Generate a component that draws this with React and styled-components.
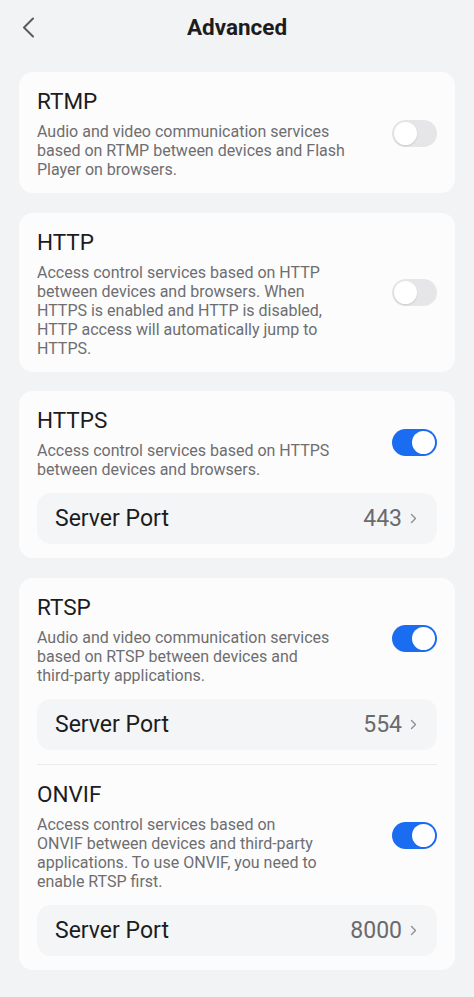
import styled, { createGlobalStyle } from "styled-components";

const GlobalStyle = createGlobalStyle`
  html, body {
    margin: 0;
    padding: 0;
    background: #f2f3f5;
  }
  body {
    font-family: Roboto, "Noto Sans", "Liberation Sans", sans-serif;
    -webkit-font-smoothing: antialiased;
  }
`;

const services = [
  {
    sections: [
      {
        title: "RTMP",
        desc: "Audio and video communication services\nbased on RTMP between devices and Flash\nPlayer on browsers.",
        on: false,
      },
    ],
  },
  {
    sections: [
      {
        title: "HTTP",
        desc: "Access control services based on HTTP\nbetween devices and browsers. When\nHTTPS is enabled and HTTP is disabled,\nHTTP access will automatically jump to\nHTTPS.",
        on: false,
      },
    ],
  },
  {
    sections: [
      {
        title: "HTTPS",
        desc: "Access control services based on HTTPS\nbetween devices and browsers.",
        on: true,
        port: "443",
      },
    ],
  },
  {
    sections: [
      {
        title: "RTSP",
        desc: "Audio and video communication services\nbased on RTSP between devices and\nthird-party applications.",
        on: true,
        port: "554",
      },
      {
        title: "ONVIF",
        desc: "Access control services based on\nONVIF between devices and third-party\napplications. To use ONVIF, you need to\nenable RTSP first.",
        on: true,
        port: "8000",
      },
    ],
  },
];

const Page = styled.div`
  min-height: 997px;
  background: #f2f3f5;
`;

const Header = styled.header`
  position: relative;
  height: 54px;
  display: flex;
  align-items: center;
  justify-content: center;
`;

const BackButton = styled.button`
  position: absolute;
  left: 16px;
  top: 14px;
  width: 24px;
  height: 26px;
  padding: 0;
  border: none;
  background: none;
  display: flex;
  align-items: center;
  justify-content: center;
`;

const Title = styled.h1`
  margin: 0;
  font-size: 22.5px;
  font-weight: 700;
  color: #1c1c1e;
`;

const List = styled.div`
  display: flex;
  flex-direction: column;
  gap: 19.5px;
  padding: 18px 19px 28px;
`;

const Card = styled.div`
  background: #fcfcfd;
  border-radius: 14px;
  padding: 0 18px 14px;
`;

const Section = styled.div`
  padding-top: 15px;
`;

const Row = styled.div`
  display: flex;
  align-items: center;
  justify-content: space-between;
`;

const TextBlock = styled.div`
  flex: 1;
`;

const ItemTitle = styled.div`
  font-size: 22.5px;
  line-height: 28px;
  color: #1c1c1e;
`;

const Desc = styled.div`
  margin-top: 7px;
  font-size: 16px;
  line-height: 19px;
  color: #6e6e70;
  white-space: pre-line;
`;

const Switch = styled.div`
  position: relative;
  flex: none;
  width: 45px;
  height: 27px;
  border-radius: 14px;
  background: ${(p) => (p.$on ? "#1a6cf0" : "#e6e6e8")};

  &::after {
    content: "";
    position: absolute;
    top: 2px;
    left: ${(p) => (p.$on ? "20px" : "2px")};
    width: 23px;
    height: 23px;
    border-radius: 50%;
    background: #fff;
    box-shadow: ${(p) =>
      p.$on ? "0 0 0 0.5px #1a6cf0" : "0 1px 2px rgba(0,0,0,0.12)"};
  }
`;

const PortRow = styled.div`
  margin-top: 14px;
  height: 51px;
  display: flex;
  align-items: center;
  justify-content: space-between;
  padding: 0 20px 0 18px;
  border-radius: 14px;
  background: #f4f5f6;
`;

const PortLabel = styled.span`
  font-size: 23px;
  color: #1c1c1e;
`;

const PortValue = styled.span`
  display: flex;
  align-items: center;
  gap: 8px;
  font-size: 23px;
  color: #6a6a6c;
`;

const Divider = styled.div`
  margin-top: 14px;
  height: 1px;
  background: #ececee;
`;

const Chevron = () => (
  <svg width="7" height="11" viewBox="0 0 7 11" fill="none">
    <path d="M1.5 1.5L5.5 5.5L1.5 9.5" stroke="#8e8e93" strokeWidth="1.4" strokeLinecap="round" strokeLinejoin="round" />
  </svg>
);

const BackIcon = () => (
  <svg width="13" height="21" viewBox="0 0 13 21" fill="none">
    <path d="M11 1.5L2 10.5L11 19.5" stroke="#5a5a5c" strokeWidth="2" strokeLinecap="round" strokeLinejoin="round" />
  </svg>
);

const App = () => {
  return (
    <Page>
      <GlobalStyle />
      <Header>
        <BackButton aria-label="Back">
          <BackIcon />
        </BackButton>
        <Title>Advanced</Title>
      </Header>
      <List>
        {services.map((card, i) => (
          <Card key={i}>
            {card.sections.map((s, j) => (
              <div key={s.title}>
                {j > 0 && <Divider />}
                <Section>
                  <Row>
                    <TextBlock>
                      <ItemTitle>{s.title}</ItemTitle>
                      <Desc>{s.desc}</Desc>
                    </TextBlock>
                    <Switch $on={s.on} />
                  </Row>
                  {s.port && (
                    <PortRow>
                      <PortLabel>Server Port</PortLabel>
                      <PortValue>
                        {s.port}
                        <Chevron />
                      </PortValue>
                    </PortRow>
                  )}
                </Section>
              </div>
            ))}
          </Card>
        ))}
      </List>
    </Page>
  );
};

export default App;
